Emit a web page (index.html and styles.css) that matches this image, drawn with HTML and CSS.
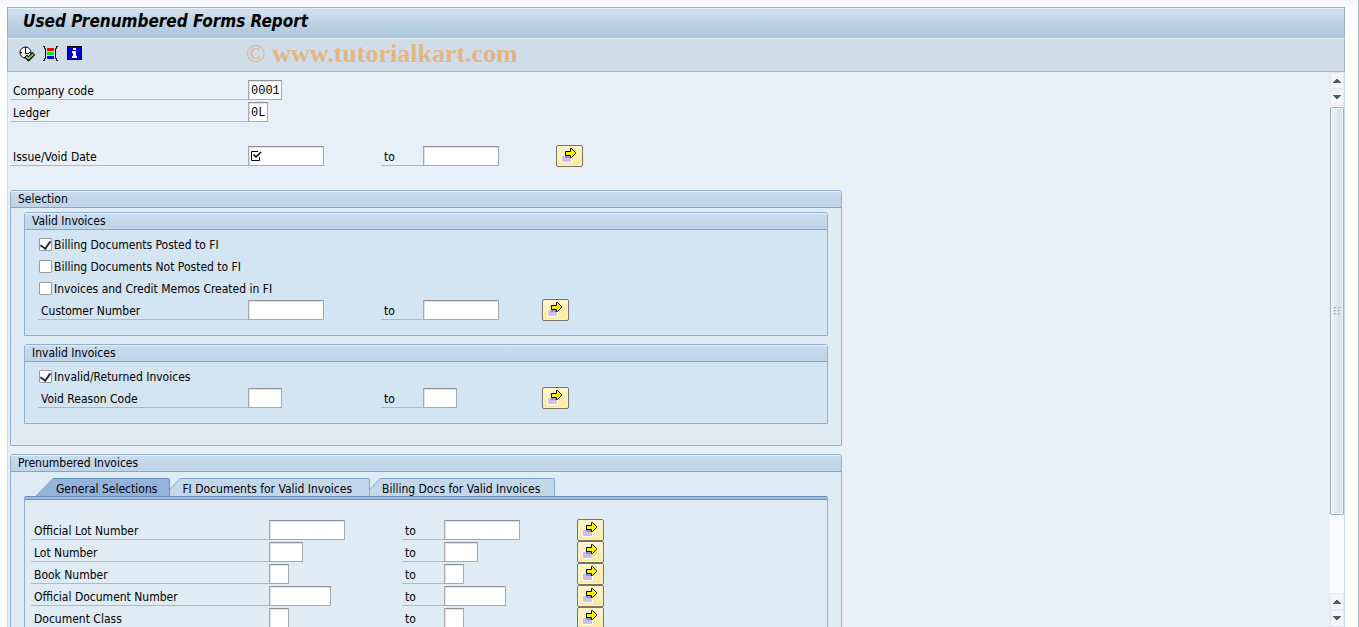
FILE: index.html
```
<!DOCTYPE html>
<html lang="en">
<head>
    <meta charset="UTF-8">
    <meta name="viewport" content="width=device-width, initial-scale=1.0">
    <title>Used Prenumbered Forms Report</title>
    <link rel="stylesheet" href="styles.css">
</head>
<body>
<svg class="symbols" aria-hidden="true">
    <symbol id="arrow" viewBox="0 0 16 15">
        <rect x="0" y="7" width="11" height="8" fill="#fff"/>
        <rect x="1" y="8" width="9" height="6" fill="#d0bfe0"/>
        <rect x="4" y="7" width="6" height="3" fill="#7f9cc8"/>
        <path d="M4.5 3.5H9.5V.5H10.5L14.5 4.5V5.5L10.5 9.500H9.5V7.5H4.5Z" fill="#ffee00" stroke="#000"/>
    </symbol>
    <symbol id="up" viewBox="0 0 8 5">
        <path d="M0 4H1V3H2V2H3V1H5V2H6V3H7V4H8V5H0Z"/>
    </symbol>
    <symbol id="down" viewBox="0 0 8 5">
        <path d="M0 0H8V1H7V2H6V3H5V4H3V3H2V2H1V1H0Z"/>
    </symbol>
</svg>
<div class="window">
    <h1 class="header">Used Prenumbered Forms Report</h1>
    <div class="toolbar">
        <button class="tool" aria-label="Execute">
            <svg width="16" height="16" viewBox="0 0 16 16">
                <circle cx="6.500" cy="6.500" r="5.500" fill="#fff" stroke="#000"/>
                <path d="M6.500 1V3M1 6.500H3M10 6.500H12M6.500 10V12M6.500 3V7.500H10" fill="none" stroke="#000"/>
                <path d="M6.500 10L9.500 13L15 7.500" fill="none" stroke="#000" stroke-width="4"/>
                <path d="M7 10.500L9.500 12.500L14.500 8" fill="none" stroke="#7fc04a" stroke-width="2"/>
            </svg>
        </button>
        <button class="tool" aria-label="Legend">
            <svg width="16" height="16" viewBox="0 0 16 16">
                <path d="M0 .5H1.500V2.500H2.500V12.500H1.500V14.500H0M15 .5H13.500V2.500H12.500V12.500H13.500V14.500H15" fill="none" stroke="#000"/>
                <rect x="4" y="2" width="7" height="3" fill="#f00"/>
                <rect x="4" y="6" width="7" height="3" fill="#0e0"/>
                <rect x="4" y="10" width="7" height="3" fill="#00f"/>
            </svg>
        </button>
        <button class="tool" aria-label="Information">
            <svg width="16" height="16" viewBox="0 0 16 16">
                <rect x=".5" y=".5" width="14" height="13" fill="#0000d8" stroke="#000"/>
                <path d="M6 2H9V4H6ZM5 5H9V10H10V12H5V10H6V7H5Z" fill="#fff"/>
            </svg>
        </button>
        <span class="watermark">© <b>www.tutorialkart.com</b></span>
    </div>
    <div class="body">
        <form class="content">
            <div class="row">
                <label for="company">Company code</label>
                <input class="field w4" id="company" value="0001">
            </div>
            <div class="row">
                <label for="ledger">Ledger</label>
                <input class="field w2" id="ledger" value="0L">
            </div>
            <div class="row date">
                <label for="date-from">Issue/Void Date</label>
                <span class="required">
                    <input class="field w10" id="date-from">
                    <svg width="12" height="12" viewBox="0 0 12 12">
                        <path d="M8 1.500H1.500V10.500H9.500V7" fill="none" stroke="#000"/>
                        <path d="M3.500 4.500L6 7L11 2" fill="none" stroke="#000" stroke-width="1.500"/>
                    </svg>
                </span>
                <label for="date-to">to</label>
                <input class="field w10" id="date-to">
                <button type="button" class="more" aria-label="Multiple selection"><svg width="16" height="15"><use href="#arrow"/></svg></button>
            </div>

            <section class="box selection">
                <h2>Selection</h2>
                <section class="box inner">
                    <h2>Valid Invoices</h2>
                    <div class="rows">
                        <label class="check"><input type="checkbox" checked>Billing Documents Posted to FI</label>
                        <label class="check"><input type="checkbox">Billing Documents Not Posted to FI</label>
                        <label class="check"><input type="checkbox">Invoices and Credit Memos Created in FI</label>
                        <div class="row">
                            <label for="customer-from">Customer Number</label>
                            <input class="field w10" id="customer-from">
                            <label for="customer-to">to</label>
                            <input class="field w10" id="customer-to">
                            <button type="button" class="more" aria-label="Multiple selection"><svg width="16" height="15"><use href="#arrow"/></svg></button>
                        </div>
                    </div>
                </section>
                <section class="box inner">
                    <h2>Invalid Invoices</h2>
                    <div class="rows">
                        <label class="check"><input type="checkbox" checked>Invalid/Returned Invoices</label>
                        <div class="row">
                            <label for="void-from">Void Reason Code</label>
                            <input class="field w4" id="void-from">
                            <label for="void-to">to</label>
                            <input class="field w4" id="void-to">
                            <button type="button" class="more" aria-label="Multiple selection"><svg width="16" height="15"><use href="#arrow"/></svg></button>
                        </div>
                    </div>
                </section>
            </section>

            <section class="box prenumbered">
                <h2>Prenumbered Invoices</h2>
                <div class="tabs">
                    <button type="button" class="tab active">
                        <svg width="18" height="18" viewBox="0 0 18 18"><path class="fill" d="M0 18L17 .5H18V18Z"/><path class="line" d="M0 18L17 .5H18"/></svg>
                        <span>General Selections</span>
                    </button>
                    <button type="button" class="tab">
                        <svg width="11" height="18" viewBox="0 0 11 18"><path class="fill" d="M0 18V11L10 .5H11V18Z"/><path class="line" d="M0 11L10 .5H11"/></svg>
                        <span>FI Documents for Valid Invoices</span>
                    </button>
                    <button type="button" class="tab last">
                        <svg width="11" height="18" viewBox="0 0 11 18"><path class="fill" d="M0 18V11L10 .5H11V18Z"/><path class="line" d="M0 11L10 .5H11"/></svg>
                        <span>Billing Docs for Valid Invoices</span>
                    </button>
                </div>
                <div class="panel">
                    <div class="row">
                        <label for="olot-from">Official Lot Number</label>
                        <input class="field w10" id="olot-from">
                        <label for="olot-to">to</label>
                        <input class="field w10" id="olot-to">
                        <button type="button" class="more" aria-label="Multiple selection"><svg width="16" height="15"><use href="#arrow"/></svg></button>
                    </div>
                    <div class="row">
                        <label for="lot-from">Lot Number</label>
                        <input class="field w4" id="lot-from">
                        <label for="lot-to">to</label>
                        <input class="field w4" id="lot-to">
                        <button type="button" class="more" aria-label="Multiple selection"><svg width="16" height="15"><use href="#arrow"/></svg></button>
                    </div>
                    <div class="row">
                        <label for="book-from">Book Number</label>
                        <input class="field w2" id="book-from">
                        <label for="book-to">to</label>
                        <input class="field w2" id="book-to">
                        <button type="button" class="more" aria-label="Multiple selection"><svg width="16" height="15"><use href="#arrow"/></svg></button>
                    </div>
                    <div class="row">
                        <label for="odoc-from">Official Document Number</label>
                        <input class="field w8" id="odoc-from">
                        <label for="odoc-to">to</label>
                        <input class="field w8" id="odoc-to">
                        <button type="button" class="more" aria-label="Multiple selection"><svg width="16" height="15"><use href="#arrow"/></svg></button>
                    </div>
                    <div class="row">
                        <label for="class-from">Document Class</label>
                        <input class="field w2" id="class-from">
                        <label for="class-to">to</label>
                        <input class="field w2" id="class-to">
                        <button type="button" class="more" aria-label="Multiple selection"><svg width="16" height="15"><use href="#arrow"/></svg></button>
                    </div>
                </div>
            </section>
        </form>
        <div class="scrollbar">
            <button aria-label="Scroll up"><svg width="8" height="5"><use href="#up"/></svg></button>
            <button aria-label="Scroll down"><svg width="8" height="5"><use href="#down"/></svg></button>
            <div class="track">
                <div class="thumb">
                    <svg width="7" height="9" viewBox="0 0 7 9"><path d="M0 0H2V2H0ZM4 0H6V2H4ZM0 3H2V5H0ZM4 3H6V5H4ZM0 6H2V8H0ZM4 6H6V8H4Z" fill="#a3b3c0"/><path d="M1 1H2V2H1ZM5 1H6V2H5ZM1 4H2V5H1ZM5 4H6V5H5ZM1 7H2V8H1ZM5 7H6V8H5Z" fill="#fff"/></svg>
                </div>
            </div>
            <button aria-label="Scroll up"><svg width="8" height="5"><use href="#up"/></svg></button>
            <button aria-label="Scroll down"><svg width="8" height="5"><use href="#down"/></svg></button>
        </div>
    </div>
</div>
</body>
</html>
```
FILE: styles.css
```
* {
    margin: 0;
    padding: 0;
    box-sizing: border-box;
}
body {
    height: 100vh;
    padding: 7px 13px 0 7px;
    overflow: hidden;
    background: linear-gradient(#f3f5fa, #fff 12px);
    border-right: 1px solid #b3c1d0;
    color: #000;
    font-family: "DejaVu Sans Condensed", "DejaVu Sans", sans-serif;
    font-size: 12px;
    line-height: 16px;
}
button, input {
    font: inherit;
    color: inherit;
}
button {
    cursor: pointer;
}
.symbols {
    display: none;
}
.window {
    height: 100%;
    display: flex;
    flex-direction: column;
}
.header {
    height: 31px;
    padding: 3px 15px;
    background: linear-gradient(#d2e1ed, #abc4dc);
    border: 1px solid #9bb0c8;
    border-bottom: none;
    box-shadow: inset 0 1px #e6eff6;
    font-size: 17px;
    font-style: italic;
    font-weight: bold;
    line-height: 20px;
}
.toolbar {
    height: 34px;
    display: flex;
    align-items: center;
    gap: 8px;
    padding: 0 11px 3px;
    background: #cfdde8;
    border: 1px solid #a0b4c6;
    border-top-color: #e6eff6;
}
.tool {
    display: flex;
    width: 16px;
    height: 16px;
    border: none;
    background: none;
}
.watermark {
    margin-left: 155px;
    color: #e3b585;
    font-family: "Liberation Serif", serif;
    font-size: 26px;
    line-height: 30px;
}
.body {
    flex: 1;
    min-height: 0;
    display: flex;
    background: #e8eff6;
    border-left: 1px solid #d3dde8;
}
.content {
    flex: 1;
    overflow: hidden;
    padding: 7px 2px 0;
}

/* selection rows: label, from, "to", to, multiple selection */
.row {
    display: grid;
    grid-template-columns: 238px 133px 42px 133px 27px;
    height: 22px;
}
.row label {
    height: 21px;
    padding: 4px 3px 0;
    border-bottom: 1px solid #b3b8bc;
}
.row.date {
    margin-top: 22px;
}
.field {
    height: 20px;
    margin-top: 1px;
    padding: 1px 2px 0;
    background: #fff;
    border: 1px solid #a6a9ad;
    border-top-color: #8e9296;
    box-shadow: inset 1px 1px #e0e2e4;
    font-family: "Liberation Mono", monospace;
    font-size: 12px;
}
.w2 {
    width: 20px;
}
.w4 {
    width: 34px;
}
.w8 {
    width: 62px;
}
.w10 {
    width: 76px;
}
.required {
    position: relative;
}
.required .field {
    display: block;
}
.required svg {
    position: absolute;
    top: 5px;
    left: 2px;
}
.more {
    display: flex;
    align-items: center;
    height: 22px;
    padding: 0 0 1px 4px;
    background: linear-gradient(#fff6cf, #fde99a);
    border: 1px solid #77736a;
    border-radius: 2px;
    box-shadow: inset 0 0 0 1px #fff3c4;
}

.box {
    background: #dfebf5;
    border: 1px solid #8fb0d0;
    border-radius: 3px 3px 0 0;
}
.box h2 {
    height: 17px;
    padding-left: 7px;
    background: linear-gradient(#cbdced, #bdd3e8);
    border-bottom: 1px solid #88a6c6;
    border-radius: 2px 2px 0 0;
    box-shadow: inset 0 1px #e4eef7;
    font-size: 12px;
    font-weight: normal;
    line-height: 16px;
}
.selection, .prenumbered {
    max-width: 832px;
}
.selection {
    margin-top: 23px;
    padding-bottom: 21px;
}
.inner {
    margin: 4px 13px 8px;
    background: #d3e4f2;
}
.inner:last-child {
    margin: 8px 13px 0;
}
.rows {
    padding: 3px 13px 14px;
}
.rows .row {
    grid-template-columns: 210px 133px 42px 119px 27px;
}
.check {
    display: flex;
    align-items: center;
    width: max-content;
    height: 22px;
    padding: 2px 0 0 1px;
}
.check input {
    appearance: none;
    display: grid;
    justify-content: center;
    width: 13px;
    height: 13px;
    margin: 0 2px 1px 0;
    background: #fff;
    border: 1px solid #9a9ea3;
    border-radius: 1px;
}
.check input:checked::before {
    content: "";
    width: 5px;
    height: 8px;
    border: solid #2c2c4a;
    border-width: 0 2px 2px 0;
    transform: rotate(35deg);
}

.prenumbered {
    margin-top: 8px;
}
.tabs {
    display: flex;
    margin: 6px 13px 0;
    padding-left: 12px;
}
.tab {
    display: flex;
    height: 18px;
    border: none;
    background: none;
}
.tab span {
    height: 18px;
    padding: 2px 17px 0 1px;
    background: #c3d7eb;
    border-top: 1px solid #86a7cb;
    border-right: 1px solid #86a7cb;
    border-radius: 0 2px 0 0;
}
.tab .fill {
    fill: #c3d7eb;
}
.tab .line {
    fill: none;
    stroke: #86a7cb;
}
.tab.active span {
    padding: 2px 12px 0 2px;
    background: #91b3dc;
    border-color: #6a90bd;
}
.tab.active .fill {
    fill: #91b3dc;
}
.tab.last span {
    padding-right: 14px;
}
.panel {
    margin: 0 13px;
    padding: 22px 6px 19px;
    border: 1px solid #8fb0d0;
    border-top-color: #6a90bd;
    border-radius: 2px 2px 0 0;
    box-shadow: inset 0 2px #9dbde3, inset 0 3px #6a90bd;
}

.scrollbar {
    display: flex;
    flex-direction: column;
    width: 15px;
    background: #fafbfc;
    border-right: 1px solid #d3dde8;
}
.scrollbar button {
    display: flex;
    align-items: center;
    justify-content: center;
    height: 17px;
    border: 1px solid #e6e9f0;
    background: #f4f6fa;
    fill: #4d5f6c;
}
.track {
    flex: 1;
    padding-top: 1px;
}
.thumb {
    display: flex;
    align-items: center;
    justify-content: center;
    height: 84%;
    background: linear-gradient(90deg, #e9f1f8, #d3e0ec);
    border: 1px solid #98aebf;
    border-radius: 2px;
    box-shadow: inset 0 0 0 1px #f5f9fc;
}
```
